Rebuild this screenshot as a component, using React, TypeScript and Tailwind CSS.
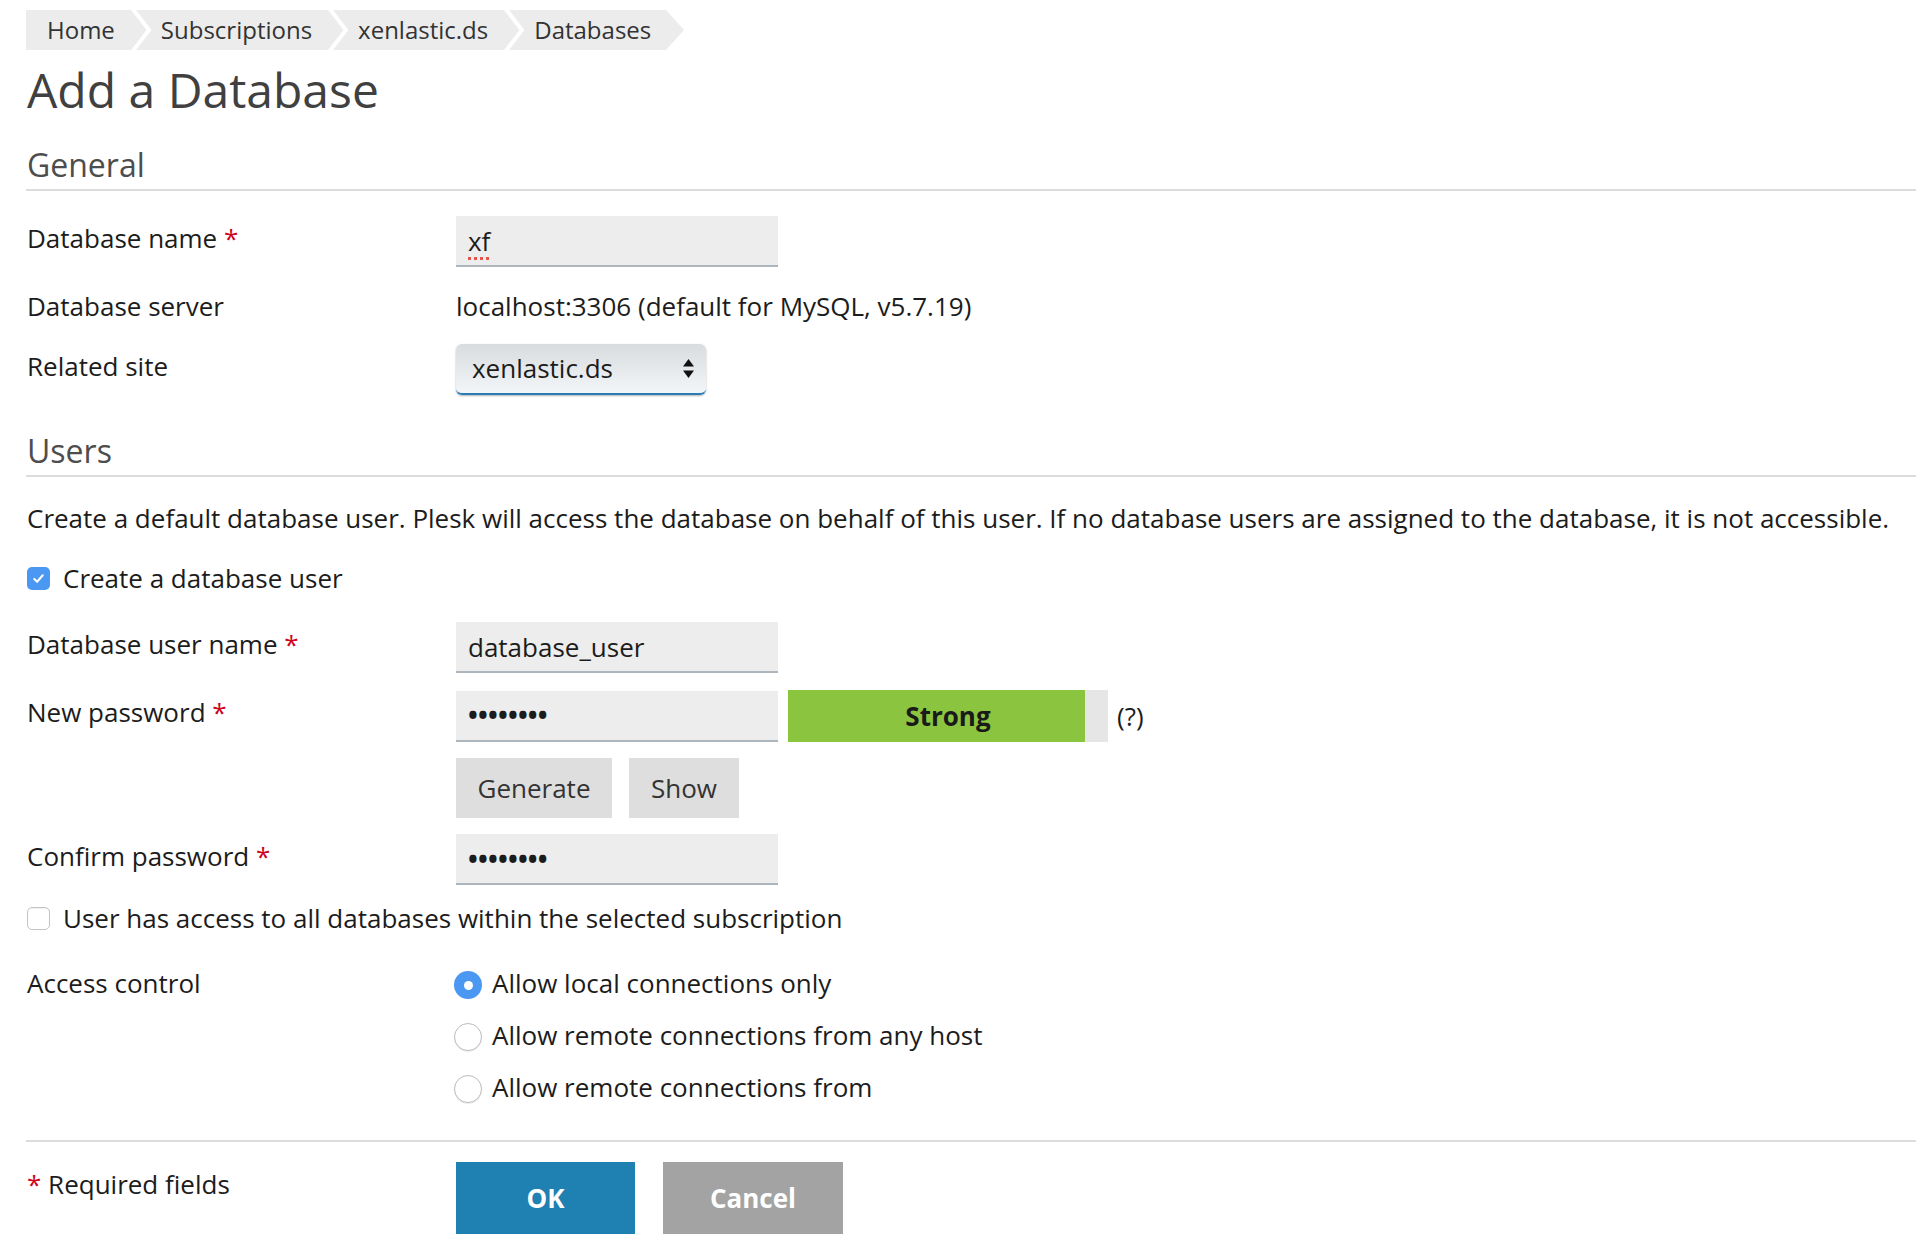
import type { ReactNode } from 'react'

const crumbs = ['Home', 'Subscriptions', 'xenlastic.ds', 'Databases']

function Breadcrumbs() {
  return (
    <nav className="flex h-10 text-[24px] text-[#333]">
      {crumbs.map((item, i) => {
        const last = i === crumbs.length - 1
        return (
          <div key={item} className="flex">
            <span
              className={`flex items-center bg-[#ececec] pr-[14px] ${i === 0 ? 'pl-[21px]' : 'pl-[8px]'}`}
            >
              {item}
            </span>
            {last ? (
              <svg width="20" height="40" viewBox="0 0 20 40">
                <polygon points="0,0 1,0 19,20 1,40 0,40" fill="#ececec" />
              </svg>
            ) : (
              <svg width="24" height="40" viewBox="0 0 24 40">
                <rect width="24" height="40" fill="#ececec" />
                <polyline points="3,-2 20,20 3,42" fill="none" stroke="#fff" strokeWidth="4" />
              </svg>
            )}
          </div>
        )
      })}
    </nav>
  )
}

function SectionTitle({ children, className = '' }: { children: ReactNode; className?: string }) {
  return (
    <h2
      className={`border-b-2 border-[#dcdcdc] pb-[2px] text-[32px] leading-[44px] text-[#4d4d4d] ${className}`}
    >
      {children}
    </h2>
  )
}

function Required() {
  return <span className="text-[#d0021b]"> *</span>
}

function Row({
  label,
  required,
  children,
  className = '',
}: {
  label?: ReactNode
  required?: boolean
  children: ReactNode
  className?: string
}) {
  return (
    <div className={`flex items-start ${className}`}>
      <div className="w-[429px] shrink-0 pt-[4px] leading-9">
        {label}
        {required ? <Required /> : null}
      </div>
      <div className="flex-1">{children}</div>
    </div>
  )
}

function TextField({ children }: { children: ReactNode }) {
  return (
    <div className="flex h-[51px] w-[322px] items-center border-b-2 border-[#adb6bd] bg-[#ededed] pl-3 leading-9">
      {children}
    </div>
  )
}

function Dots() {
  return <span className="text-[26px] font-bold tracking-[0.2px]">••••••••</span>
}

function Checkbox({ checked }: { checked?: boolean }) {
  return checked ? (
    <span className="flex h-[23px] w-[23px] items-center justify-center rounded-[5px] bg-[#4a98f2]">
      <svg width="15" height="15" viewBox="0 0 16 16">
        <path d="M3.5 8.5l3 3 6-7" fill="none" stroke="#fff" strokeWidth="2.2" strokeLinecap="round" strokeLinejoin="round" />
      </svg>
    </span>
  ) : (
    <span className="h-[23px] w-[23px] rounded-[5px] border border-[#c4c4c4] bg-white shadow-[inset_0_1px_1px_rgba(0,0,0,0.06)]" />
  )
}

function Radio({ checked, label }: { checked?: boolean; label: string }) {
  return (
    <div className="flex h-9 items-center gap-[10px]">
      {checked ? (
        <span className="-ml-[2px] mt-[4px] flex h-[28px] w-[28px] items-center justify-center rounded-full bg-[#4a98f2]">
          <span className="h-[9px] w-[9px] rounded-full bg-white" />
        </span>
      ) : (
        <span className="-ml-[2px] mt-[4px] h-[28px] w-[28px] rounded-full border border-[#bdbdbd] bg-white shadow-[0_1px_1px_rgba(0,0,0,0.08)]" />
      )}
      <span>{label}</span>
    </div>
  )
}

export default function App() {
  return (
    <div className="min-h-screen bg-white pl-[26px] pt-[10px] font-['Open_Sans',sans-serif] text-[26px] text-[#1c1c1c]">
      <Breadcrumbs />
      <h1 className="mt-[8px] pl-[1px] text-[48px] leading-[64px] text-[#404040]">Add a Database</h1>

      <SectionTitle className="mt-[21px] pl-[1px]">General</SectionTitle>

      <div className="pl-[1px]">
        <Row label="Database name" required className="mt-[25px]">
          <TextField>
            <span className="underline decoration-[#e5534b] decoration-dotted decoration-[3px] underline-offset-[6px]">
              xf
            </span>
          </TextField>
        </Row>

        <Row label="Database server" className="mt-[17px]">
          <div className="pt-[4px] leading-9">localhost:3306 (default for MySQL, v5.7.19)</div>
        </Row>

        <Row label="Related site" className="mt-[20px]">
          <div className="flex h-[51px] w-[250px] items-center justify-between rounded-[6px] border-b-2 border-[#2b7cb4] bg-linear-to-b from-[#d8dcdf] to-[#f3f6f8] pl-4 pr-[11px] shadow-[0_1px_2px_rgba(0,0,0,0.3)]">
            <span>xenlastic.ds</span>
            <svg width="13" height="19" viewBox="0 0 13 19">
              <polygon points="1,7.5 6.5,0 12,7.5" fill="#111" />
              <polygon points="1,11.5 12,11.5 6.5,19" fill="#111" />
            </svg>
          </div>
        </Row>
      </div>

      <SectionTitle className="mt-[34px] pl-[1px]">Users</SectionTitle>

      <div className="pl-[1px]">
        <p className="mt-[23px] leading-9">
          Create a default database user. Plesk will access the database on behalf of this user. If no database users
          are assigned to the database, it is not accessible.
        </p>

        <label className="mt-[24px] flex h-9 items-center gap-[13px]">
          <Checkbox checked />
          <span>Create a database user</span>
        </label>

        <Row label="Database user name" required className="mt-[26px]">
          <TextField>database_user</TextField>
        </Row>

        <Row label="New password" required className="mt-[17px]">
          <div className="flex items-center">
            <TextField>
              <Dots />
            </TextField>
            <div className="relative ml-[10px] flex h-[52px] w-[320px] bg-[#e6e6e6]">
              <div className="h-full w-[297px] bg-[#8bc540]" />
              <span className="absolute inset-0 flex items-center justify-center font-bold text-[#1a1a1a]">
                Strong
              </span>
            </div>
            <span className="ml-[9px] leading-9">(?)</span>
          </div>
        </Row>

        <Row className="mt-[16px]">
          <div className="flex gap-[17px] text-[#333]">
            <button type="button" className="h-[60px] w-[156px] bg-[#dedede]">
              Generate
            </button>
            <button type="button" className="h-[60px] w-[110px] bg-[#dedede]">
              Show
            </button>
          </div>
        </Row>

        <Row label="Confirm password" required className="mt-[16px]">
          <TextField>
            <Dots />
          </TextField>
        </Row>

        <label className="mt-[15px] flex h-9 items-center gap-[13px]">
          <Checkbox />
          <span>User has access to all databases within the selected subscription</span>
        </label>

        <Row label="Access control" className="mt-[25px]">
          <div className="flex flex-col gap-4 pt-[4px]">
            <Radio checked label="Allow local connections only" />
            <Radio label="Allow remote connections from any host" />
            <Radio label="Allow remote connections from" />
          </div>
        </Row>
      </div>

      <div className="mt-[35px] border-t-2 border-[#dcdcdc] pl-[1px]">
        <Row
          className="mt-[20px]"
          label={
            <>
              <span className="text-[#d0021b]">*</span> Required fields
            </>
          }
        >
          <div className="flex gap-[28px] font-bold text-white">
            <button type="button" className="h-[72px] w-[179px] bg-[#1f80b2]">
              OK
            </button>
            <button type="button" className="h-[72px] w-[180px] bg-[#a3a3a3]">
              Cancel
            </button>
          </div>
        </Row>
      </div>
    </div>
  )
}
